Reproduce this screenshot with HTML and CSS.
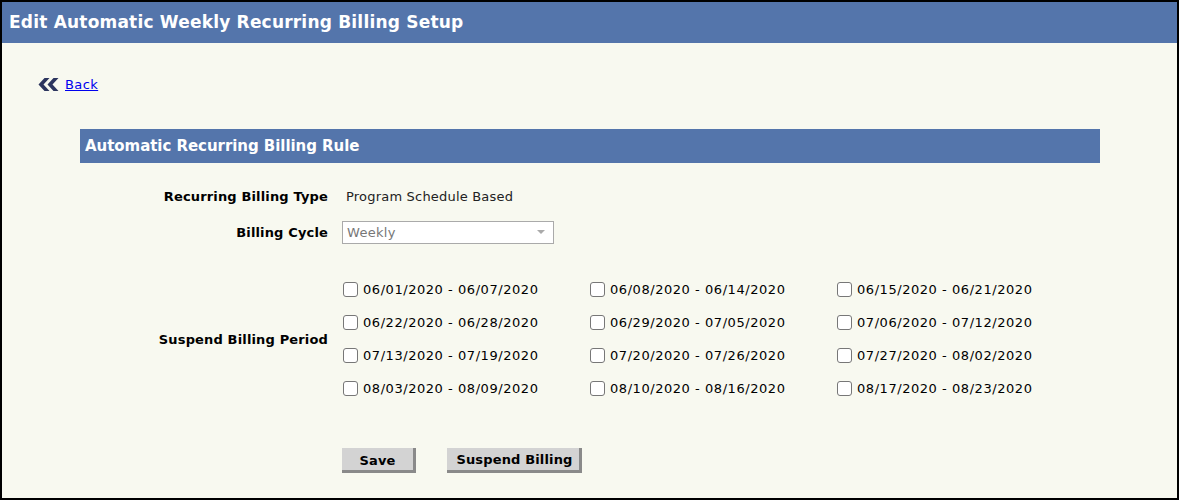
FILE: index.html
```html
<!DOCTYPE html>
<html>
<head>
<meta charset="utf-8">
<link rel="stylesheet" href="styles.css">
</head>
<body>
<div class="frame">
  <div class="page-head">Edit Automatic Weekly Recurring Billing Setup</div>
  <div class="content">
    <div class="back">
      <svg class="back-icon" width="22" height="13" viewBox="0 0 22 13">
        <polygon points="6.5,0 11.5,0 5.5,6.5 11.5,13 6.5,13 0.5,6.5" fill="#2c355e"/>
        <polygon points="15.5,0 20.5,0 14.5,6.5 20.5,13 15.5,13 9.5,6.5" fill="#2c355e"/>
      </svg>
      <a href="#" class="back-link">Back</a>
    </div>
    <div class="section">
      <div class="section-head">Automatic Recurring Billing Rule</div>
      <div class="form">
        <div class="label row-type">Recurring Billing Type</div>
        <div class="value text-value row-type">Program Schedule Based</div>

        <div class="label row-cycle">Billing Cycle</div>
        <div class="value row-cycle">
          <div class="select"><span>Weekly</span><span class="arrow"></span></div>
        </div>

        <div class="label row-periods">Suspend Billing Period</div>
        <div class="value row-periods">
          <div class="periods">
            <label class="period"><span class="cb"></span>06/01/2020 - 06/07/2020</label>
            <label class="period"><span class="cb"></span>06/08/2020 - 06/14/2020</label>
            <label class="period"><span class="cb"></span>06/15/2020 - 06/21/2020</label>
            <label class="period"><span class="cb"></span>06/22/2020 - 06/28/2020</label>
            <label class="period"><span class="cb"></span>06/29/2020 - 07/05/2020</label>
            <label class="period"><span class="cb"></span>07/06/2020 - 07/12/2020</label>
            <label class="period"><span class="cb"></span>07/13/2020 - 07/19/2020</label>
            <label class="period"><span class="cb"></span>07/20/2020 - 07/26/2020</label>
            <label class="period"><span class="cb"></span>07/27/2020 - 08/02/2020</label>
            <label class="period"><span class="cb"></span>08/03/2020 - 08/09/2020</label>
            <label class="period"><span class="cb"></span>08/10/2020 - 08/16/2020</label>
            <label class="period"><span class="cb"></span>08/17/2020 - 08/23/2020</label>
          </div>
        </div>

        <div class="label"></div>
        <div class="value buttons">
          <button class="btn btn-save">Save</button>
          <button class="btn btn-suspend">Suspend Billing</button>
        </div>
      </div>
    </div>
  </div>
</div>
</body>
</html>
```
FILE: styles.css
```css
* { box-sizing: border-box; }
html, body { margin: 0; padding: 0; }
body {
  width: 1179px;
  height: 500px;
  font-family: "DejaVu Sans", Verdana, sans-serif;
  background: #000;
  overflow: hidden;
}
.frame {
  width: 1179px;
  height: 500px;
  border: 2px solid #000;
  background: #f8f9f0;
}
.page-head {
  height: 41px;
  background: #5475ab;
  color: #fff;
  font-weight: bold;
  font-size: 17px;
  letter-spacing: 0.2px;
  line-height: 41px;
  padding-left: 7px;
}
.content {
  padding-left: 36px;
}
.back {
  display: flex;
  align-items: center;
  height: 15px;
  margin-top: 34px;
}
.back-icon { margin-right: 5px; }
.back-link {
  color: #0000ee;
  font-size: 13px;
  letter-spacing: 0.4px;
  text-decoration: underline;
}
.section {
  margin-left: 42px;
  margin-top: 37px;
  width: 1020px;
}
.section-head {
  height: 34px;
  background: #5475ab;
  color: #fff;
  font-weight: bold;
  font-size: 15px;
  letter-spacing: -0.05px;
  line-height: 34px;
  padding-left: 5px;
}
.form {
  display: grid;
  grid-template-columns: 248px 1fr;
  column-gap: 14px;
  margin-top: 22px;
  font-size: 13px;
  color: #000;
}
.label {
  font-weight: bold;
  font-size: 13px;
  letter-spacing: 0.15px;
  display: flex;
  align-items: center;
  justify-content: flex-end;
  text-align: right;
}
.value { display: flex; align-items: center; }
.row-type { height: 22px; }
.text-value { padding-left: 4px; color: #222; letter-spacing: 0.2px; }
.row-cycle { height: 24px; margin-top: 13px; }
.select {
  width: 212px;
  height: 23px;
  border: 1px solid #aaa;
  background: #fff;
  color: #777;
  display: flex;
  align-items: center;
  justify-content: space-between;
  padding: 0 8px 0 4px;
  letter-spacing: 0.3px;
}
.arrow {
  width: 0; height: 0;
  border-left: 4px solid transparent;
  border-right: 4px solid transparent;
  border-top: 4px solid #aaa;
}
.row-periods { margin-top: 29px; }
.periods {
  display: grid;
  grid-template-columns: repeat(3, 247px);
  grid-auto-rows: 33px;
}
.period {
  display: flex;
  align-items: center;
  color: #000;
  font-size: 13px;
  letter-spacing: 0.55px;
  white-space: nowrap;
}
.cb {
  width: 15px;
  height: 15px;
  border: 1px solid #777;
  border-radius: 3px;
  background: #fff;
  margin-left: 1px;
  margin-right: 5px;
  flex: none;
}
.buttons {
  margin-top: 43px;
  gap: 31px;
}
.btn {
  font-family: "DejaVu Sans", Verdana, sans-serif;
  font-weight: bold;
  font-size: 13px;
  letter-spacing: 0.15px;
  color: #000;
  background: #d3d3d3;
  border: none;
  border-right: 3px solid #8a8a8a;
  border-bottom: 3px solid #8a8a8a;
  height: 25px;
  padding: 0;
}
.btn-save { width: 74px; padding-top: 3px; }
.btn-suspend { width: 135px; padding-left: 3px; }
```
